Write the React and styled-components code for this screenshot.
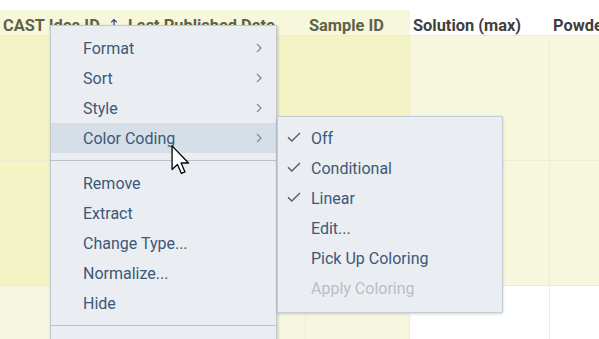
import React from 'react'
import styled, { createGlobalStyle } from 'styled-components'

const GlobalStyle = createGlobalStyle`
  html, body { margin:0; padding:0; background:#fff; overflow:hidden; }
  body { font-family: Roboto, "Liberation Sans", sans-serif; }
`

const columns = [
  { title: 'CAST Idea ID', width: 125, marked: true, sort: true },
  { title: 'Last Published Date', width: 181, marked: true },
  { title: 'Sample ID', width: 104, marked: true },
  { title: 'Solution (max)', width: 140 },
  { title: 'Powder', width: 120 },
]

const rows = [
  { height: 125, marked: true },
  { height: 125, marked: true },
  { height: 80 },
]

const cellBg = (col, row) => {
  if (col && row) return '#f3f3c6'
  if (row) return '#f7f7de'
  if (col) return '#f7f7e0'
  return '#ffffff'
}

function Grid() {
  return (
    <Table>
      <HeaderRow>
        {columns.map((c) => (
          <HeaderCell key={c.title} $w={c.width} $marked={c.marked}>
            {c.title}
            {c.sort && (
              <SortMark viewBox="0 0 8 12" width="8" height="12">
                <path d="M4 11.5V1.5M1.2 4.3L4 1.5l2.8 2.8" fill="none" stroke="#2b3a9c" strokeWidth="1.2" />
              </SortMark>
            )}
          </HeaderCell>
        ))}
      </HeaderRow>
      {rows.map((r, i) => (
        <BodyRow key={i} $h={r.height}>
          {columns.map((c) => (
            <BodyCell key={c.title} $w={c.width} $bg={cellBg(c.marked, r.marked)} />
          ))}
        </BodyRow>
      ))}
    </Table>
  )
}

const Chevron = () => (
  <ChevronSvg viewBox="0 0 6 10" width="6" height="10">
    <path d="M1 1l4 4-4 4" fill="none" stroke="#7b8da2" strokeWidth="1.3" />
  </ChevronSvg>
)

const Check = () => (
  <CheckSvg viewBox="0 0 14 10" width="14" height="10">
    <path d="M1 5.2l3.8 3.8L13 1" fill="none" stroke="#4b5a6e" strokeWidth="1.3" />
  </CheckSvg>
)

function MainMenu() {
  const top = ['Format', 'Sort', 'Style', 'Color Coding']
  const bottom = ['Remove', 'Extract', 'Change Type...', 'Normalize...', 'Hide']
  return (
    <Menu>
      {top.map((t) => (
        <Item key={t} $active={t === 'Color Coding'}>
          <span>{t}</span>
          <Chevron />
        </Item>
      ))}
      <Separator />
      {bottom.map((t) => (
        <Item key={t}>
          <span>{t}</span>
        </Item>
      ))}
      <Separator />
      <Tail />
    </Menu>
  )
}

function SubMenu() {
  const items = [
    { t: 'Off', check: true },
    { t: 'Conditional', check: true },
    { t: 'Linear', check: true },
    { t: 'Edit...' },
    { t: 'Pick Up Coloring' },
    { t: 'Apply Coloring', disabled: true },
  ]
  return (
    <Sub>
      {items.map((i) => (
        <SubItem key={i.t} $disabled={i.disabled}>
          <CheckSlot>{i.check && <Check />}</CheckSlot>
          {i.t}
        </SubItem>
      ))}
    </Sub>
  )
}

export default function App() {
  return (
    <Page>
      <GlobalStyle />
      <Grid />
      <MainMenu />
      <SubMenu />
      <Cursor viewBox="0 0 13 21" width="19" height="30">
        <path d="M0.6 0.6V17.2L4.4 13.6L7.1 19.9L9.6 18.8L6.9 12.6H12.1Z" fill="#fff" stroke="#000" strokeWidth="0.9" strokeLinejoin="round" />
      </Cursor>
    </Page>
  )
}

const Page = styled.div`
  position:relative;
  width:599px;
  height:339px;
  overflow:hidden;
  padding-top:10px;
  box-sizing:border-box;
`

const Table = styled.div`
  display:flex;
  flex-direction:column;
  width:670px;
`

const HeaderRow = styled.div`
  display:flex;
  height:25px;
  border-bottom:1px solid #ecebd8;
`

const HeaderCell = styled.div`
  flex:0 0 ${(p) => p.$w}px;
  display:flex;
  align-items:flex-end;
  padding:0 0 0 3px;
  box-sizing:border-box;
  background:${(p) => (p.$marked ? '#f7f7dc' : '#ffffff')};
  color:${(p) => (p.$marked ? '#5f6249' : '#3f3f3f')};
  font-size:16.4px;
  line-height:18px;
  font-weight:700;
  white-space:nowrap;
  overflow:hidden;
`

const SortMark = styled.svg`
  margin:0 0 5px 10px;
  flex:none;
`

const BodyRow = styled.div`
  display:flex;
  height:${(p) => p.$h}px;
  border-bottom:1px solid #ecebd4;
  box-sizing:border-box;
`

const BodyCell = styled.div`
  flex:0 0 ${(p) => p.$w}px;
  background:${(p) => p.$bg};
  border-right:1px solid #ecece0;
  box-sizing:border-box;
`

const Menu = styled.div`
  position:absolute;
  left:50px;
  top:25px;
  width:227px;
  box-sizing:border-box;
  padding-top:7px;
  background:#eaeef2;
  border:1px solid #bfc7cf;
  box-shadow:1px 1px 3px rgba(60,70,40,0.25);
  font-size:16px;
  color:#3d5876;
`

const Item = styled.div`
  display:flex;
  align-items:center;
  justify-content:space-between;
  height:30px;
  padding:0 14px 0 32px;
  background:${(p) => (p.$active ? '#d6dfe7' : 'transparent')};
`

const ChevronSvg = styled.svg`
  flex:none;
`

const Separator = styled.div`
  height:1px;
  margin:7px 0;
  background:#b7c3cf;
`

const Tail = styled.div`
  height:30px;
`

const Sub = styled.div`
  position:absolute;
  left:277px;
  top:116px;
  width:226px;
  box-sizing:border-box;
  padding:6px 0 9px;
  background:#eaeef2;
  border:1px solid #c3cbd3;
  border-radius:2px;
  box-shadow:0 1px 3px rgba(0,0,0,0.18);
  font-size:16px;
  color:#3d5876;
`

const SubItem = styled.div`
  display:flex;
  align-items:center;
  height:30px;
  color:${(p) => (p.$disabled ? '#b9bec4' : '#3d5876')};
`

const CheckSlot = styled.div`
  width:33px;
  padding-left:9px;
  box-sizing:border-box;
  display:flex;
  align-items:center;
`

const CheckSvg = styled.svg`
  flex:none;
  margin-top:-2px;
`

const Cursor = styled.svg`
  position:absolute;
  left:171px;
  top:145px;
`
